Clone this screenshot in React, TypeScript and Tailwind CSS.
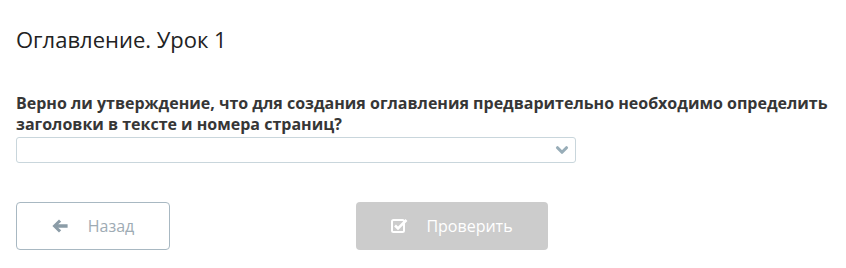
import { ChevronDown } from "lucide-react";

function ArrowLeftIcon() {
  return (
    <svg width="16" height="14" viewBox="0 0 16 14" fill="currentColor">
      <path d="M0.4 7 L7 0.6 L9.2 2.8 L6.2 5.3 L15.6 5.3 L15.6 8.7 L6.2 8.7 L9.2 11.2 L7 13.4 Z" />
    </svg>
  );
}

function CheckSquareIcon() {
  return (
    <svg width="17" height="16" viewBox="0 0 17 16" fill="none">
      <rect x="1" y="2" width="12" height="12" rx="1.5" stroke="currentColor" strokeWidth="2" />
      <path d="M4 7.5 L7 10.5 L15.5 2" stroke="currentColor" strokeWidth="2.6" />
    </svg>
  );
}

export default function App() {
  return (
    <div
      className="w-[846px] h-[268px] bg-white px-4 pt-[24px]"
      style={{ fontFamily: '"Open Sans", sans-serif' }}
    >
      <h1 className="text-[22px] leading-[30px] text-[#222]">
        Оглавление. Урок 1
      </h1>
      <p className="mt-[39px] text-[16px] leading-[21px] font-bold text-[#363636]">
        Верно ли утверждение, что для создания оглавления предварительно
        необходимо определить заголовки в тексте и номера страниц?
      </p>
      <div className="mt-[2px] w-[560px] h-[26px] border border-[#c9d6dc] rounded-[3px] flex items-center justify-end pr-[4px]">
        <ChevronDown size={18} strokeWidth={4.2} className="text-[#98adb8]" />
      </div>
      <div className="mt-[39px] flex items-center">
        <button className="w-[154px] h-[48px] border border-[#a8b8c2] rounded-[4px] flex items-center justify-center gap-[20px] text-[#9eabb4] text-[16px]">
          <span className="text-[#8b9ca7]">
            <ArrowLeftIcon />
          </span>
          <span>Назад</span>
        </button>
        <button className="ml-[186px] w-[192px] h-[48px] rounded-[4px] bg-[#cccccc] flex items-center justify-center gap-[18px] text-white text-[16px]">
          <CheckSquareIcon />
          <span>Проверить</span>
        </button>
      </div>
    </div>
  );
}
